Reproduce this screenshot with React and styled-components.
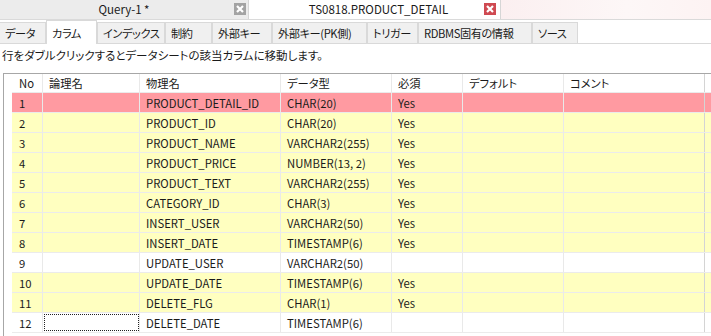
import styled, { createGlobalStyle } from "styled-components";

const GlobalStyle = createGlobalStyle`
  body {
    margin: 0;
    background: #ffffff;
    font-family: "Noto Sans CJK JP", "Noto Sans", sans-serif;
    font-size: 11.5px;
    color: #1a1a1a;
    font-feature-settings: "palt";
  }
`;

const Page = styled.div`
  width: 711px;
  height: 336px;
  overflow: hidden;
`;

const DocBar = styled.div`
  display: flex;
  height: 20px;
  border-bottom: 1px solid #dadada;
  box-sizing: border-box;
`;

const DocTab = styled.div`
  position: relative;
  display: flex;
  align-items: center;
  justify-content: center;
  width: ${({ w }) => w}px;
  box-sizing: border-box;
  padding-left: ${({ shift }) => shift ?? 0}px;
  background: ${({ active }) => (active ? "#ffffff" : "#ececec")};
  border-right: 1px solid #d6d6d6;
  font-size: 11.5px;
  line-height: 1;
`;

const CloseBox = styled.span`
  position: absolute;
  right: ${({ r }) => r}px;
  top: 3px;
  width: 12px;
  height: 12px;
  display: flex;
`;

const DocFiller = styled.div`
  flex: 1;
  background: linear-gradient(90deg, #fbeff0, #fdf7f7 60%, #fdf3f3);
`;

const SheetTabs = styled.div`
  display: flex;
  height: 24px;
  box-sizing: border-box;
  border-bottom: 1px solid #d9d9d9;
  padding-top: 2px;
`;

const SheetTab = styled.div`
  width: ${({ w }) => w}px;
  box-sizing: border-box;
  display: flex;
  align-items: center;
  padding-left: 5px;
  background: ${({ active }) => (active ? "#ffffff" : "#f0f0f0")};
  border: 1px solid #d9d9d9;
  border-left: ${({ first }) => (first ? "none" : "1px solid #d9d9d9")};
  border-bottom: none;
  margin-top: ${({ active }) => (active ? "-2px" : "0")};
  margin-bottom: ${({ active }) => (active ? "-1px" : "0")};
  font-size: 11.2px;
  letter-spacing: -0.4px;
  white-space: nowrap;
  overflow: hidden;
`;

const Hint = styled.div`
  height: 22px;
  padding-left: 2px;
  display: flex;
  align-items: center;
  font-size: 11.5px;
  margin-bottom: 7px;
`;

const GridFrame = styled.div`
  margin-left: 3px;
  border-left: 1px solid #a7a7a7;
  border-top: 1px solid #a7a7a7;
  padding-left: 8px;
  height: 300px;
`;

const Row = styled.div`
  display: grid;
  grid-template-columns: 31px 97px 141px 111px 71px 101px 141px;
  height: ${({ header }) => (header ? 19 : 20)}px;
  box-sizing: border-box;
  background: ${({ tone }) => tone};
  border-bottom: 1px solid #ebebeb;
`;

const Cell = styled.div`
  display: flex;
  align-items: center;
  box-sizing: border-box;
  padding-left: ${({ pad }) => pad ?? 6}px;
  border-right: 1px solid ${({ edge }) => (edge ? "#d4d4d4" : "#e9e9e9")};
  white-space: nowrap;
  overflow: hidden;
  font-size: 11.3px;
`;

const FocusCell = styled(Cell)`
  outline: 1px dotted #222;
  outline-offset: -2px;
`;

const CloseIcon = ({ color }) => (
  <svg width="12" height="12" viewBox="0 0 12 12">
    <rect x="0" y="0" width="12" height="12" fill={color} />
    <path d="M3 3 L9 9 M9 3 L3 9" stroke="#fff" strokeWidth="2.2" />
  </svg>
);

const tabs = [
  ["データ", 46],
  ["カラム", 51],
  ["インデックス", 68],
  ["制約", 47],
  ["外部キー", 60],
  ["外部キー(PK側)", 95],
  ["トリガー", 51],
  ["RDBMS固有の情報", 114],
  ["ソース", 46],
];

const rows = [
  ["PRODUCT_DETAIL_ID", "CHAR(20)", true],
  ["PRODUCT_ID", "CHAR(20)", true],
  ["PRODUCT_NAME", "VARCHAR2(255)", true],
  ["PRODUCT_PRICE", "NUMBER(13, 2)", true],
  ["PRODUCT_TEXT", "VARCHAR2(255)", true],
  ["CATEGORY_ID", "CHAR(3)", true],
  ["INSERT_USER", "VARCHAR2(50)", true],
  ["INSERT_DATE", "TIMESTAMP(6)", true],
  ["UPDATE_USER", "VARCHAR2(50)", false],
  ["UPDATE_DATE", "TIMESTAMP(6)", true],
  ["DELETE_FLG", "CHAR(1)", true],
  ["DELETE_DATE", "TIMESTAMP(6)", false],
];

const toneFor = (i, req) => {
  if (i === 0) return "#ff9aa1";
  return req ? "#ffffc0" : "#ffffff";
};

export default function App() {
  return (
    <Page>
      <GlobalStyle />
      <DocBar>
        <DocTab w={249}>
          Query-1 *
          <CloseBox r={2}>
            <CloseIcon color="#a3a3a3" />
          </CloseBox>
        </DocTab>
        <DocTab w={252} shift={8} active>
          TS0818.PRODUCT_DETAIL
          <CloseBox r={4}>
            <CloseIcon color="#cf4a52" />
          </CloseBox>
        </DocTab>
        <DocFiller />
      </DocBar>
      <SheetTabs>
        {tabs.map(([label, w], i) => (
          <SheetTab key={label} w={w} first={i === 0} active={i === 1}>
            {label}
          </SheetTab>
        ))}
      </SheetTabs>
      <Hint>行をダブルクリックするとデータシートの該当カラムに移動します。</Hint>
      <GridFrame>
        <Row header tone="#ffffff">
          <Cell pad={7}>No</Cell>
          <Cell>論理名</Cell>
          <Cell>物理名</Cell>
          <Cell>データ型</Cell>
          <Cell>必須</Cell>
          <Cell>デフォルト</Cell>
          <Cell edge>コメント</Cell>
        </Row>
        {rows.map(([name, type, req], i) => (
          <Row key={name} tone={toneFor(i, req)}>
            <Cell pad={7}>{i + 1}</Cell>
            {i === rows.length - 1 ? <FocusCell /> : <Cell />}
            <Cell>{name}</Cell>
            <Cell>{type}</Cell>
            <Cell>{req ? "Yes" : ""}</Cell>
            <Cell />
            <Cell edge />
          </Row>
        ))}
      </GridFrame>
    </Page>
  );
}
